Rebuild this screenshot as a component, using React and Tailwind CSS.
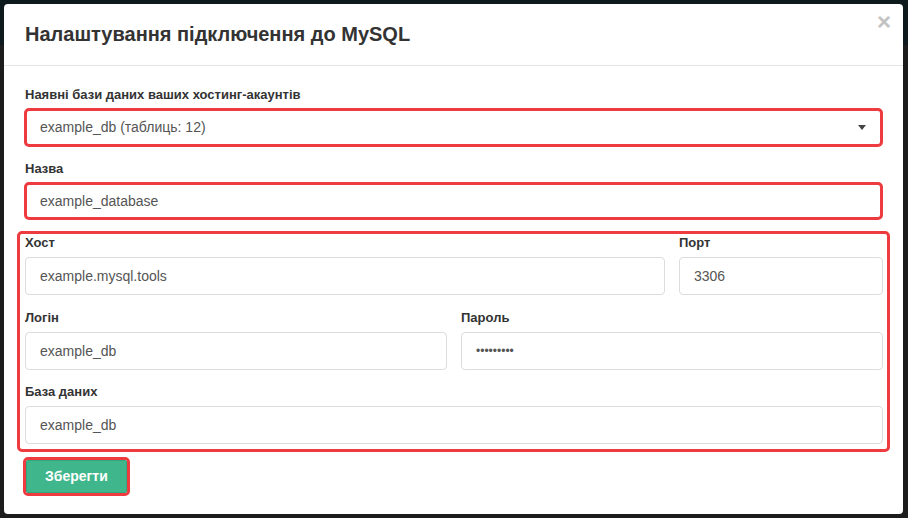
import { useState } from "react";

const font = { fontFamily: '"Liberation Sans", Arial, sans-serif' };

export default function App() {
  const [form, setForm] = useState({
    existing: "example_db",
    name: "example_database",
    host: "example.mysql.tools",
    port: "3306",
    login: "example_db",
    password: "123456789",
    database: "example_db",
  });

  const handleChange = (e) => {
    setForm({ ...form, [e.target.name]: e.target.value });
  };

  return (
    <div
      className="w-[908px] h-[518px] bg-[linear-gradient(#0e191d_0,#0e191d_45px,#1c1c1c_45px)] pt-[4px] pl-[4px]"
      style={font}
    >
      <div className="w-[899px] h-[510px] bg-white rounded-[4px] flex flex-col">
        <div className="h-[62px] flex justify-between border-b border-[#e5e5e5] pl-[21px] pr-[12px]">
          <h2 className="text-[20px] font-bold text-[#333] leading-[22px] pt-[19px]">
            Налаштування підключення до MySQL
          </h2>
          <button className="text-[#c2c2c2] text-[24px] font-bold leading-none pt-[6px] h-fit">
            ×
          </button>
        </div>

        <div className="px-[20px] pt-[20px] flex flex-col">
          <Label>Наявні бази даних ваших хостинг-акаунтів</Label>
          <div className="mt-[4px] border-[3px] border-[#ee3b3f] rounded-[5px]">
            <div className="h-[33px] flex items-center justify-between pl-[13px] pr-[14px] text-[14px] text-[#555]">
              <span>example_db (таблиць: 12)</span>
              <span className="w-0 h-0 border-l-[4px] border-r-[4px] border-t-[5px] border-l-transparent border-r-transparent border-t-[#444]"></span>
            </div>
          </div>

          <div className="mt-[13px]">
            <Label>Назва</Label>
          </div>
          <div className="mt-[4px] border-[3px] border-[#ee3b3f] rounded-[5px]">
            <input
              name="name"
              value={form.name}
              onChange={handleChange}
              className="w-full h-[32px] pl-[13px] text-[14px] text-[#555] outline-none bg-transparent"
            />
          </div>

          <div className="-mx-[7px] mt-[11px] border-[3px] border-[#ee3b3f] rounded-[5px] pl-[5px] pr-[4px] pb-[5px]">
            <div className="grid grid-cols-[640px_1fr] gap-x-[14px]">
              <Field label="Хост" name="host" value={form.host} onChange={handleChange} />
              <Field label="Порт" name="port" value={form.port} onChange={handleChange} />
            </div>
            <div className="grid grid-cols-2 gap-x-[14px] mt-[14px]">
              <Field label="Логін" name="login" value={form.login} onChange={handleChange} />
              <Field
                label="Пароль"
                name="password"
                type="password"
                value={form.password}
                onChange={handleChange}
              />
            </div>
            <div className="mt-[13px]">
              <Field label="База даних" name="database" value={form.database} onChange={handleChange} />
            </div>
          </div>

          <div className="-ml-[1px] mt-[5px] w-fit border-[3px] border-[#ee3b3f] rounded-[5px]">
            <button className="h-[33px] px-[18px] bg-[#3fb68b] border border-[#34a67d] rounded-[2px] text-white font-bold text-[14px]">
              Зберегти
            </button>
          </div>
        </div>
      </div>
    </div>
  );
}

function Label({ children }) {
  return (
    <label className="block text-[13px] font-bold text-[#333] leading-[18px] pl-[1px]">
      {children}
    </label>
  );
}

function Field({ label, name, value, onChange, type = "text" }) {
  return (
    <div className="flex flex-col">
      <label className="block text-[13px] font-bold text-[#333] leading-[18px]">{label}</label>
      <input
        type={type}
        name={name}
        value={value}
        onChange={onChange}
        className={`mt-[5px] w-full h-[38px] border border-[#dcdcdc] rounded-[4px] px-[14px] text-[#555] outline-none ${
          type === "password" ? "text-[12px]" : "text-[14px]"
        }`}
      />
    </div>
  );
}
